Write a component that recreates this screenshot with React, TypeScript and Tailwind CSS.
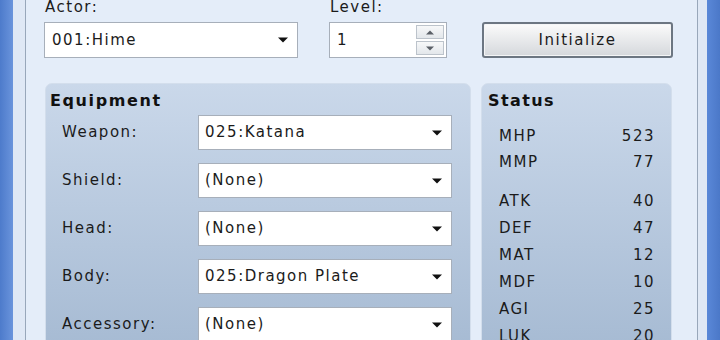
import React from 'react';

const EQUIPMENT = [
  { label: 'Weapon:', value: '025:Katana' },
  { label: 'Shield:', value: '(None)' },
  { label: 'Head:', value: '(None)' },
  { label: 'Body:', value: '025:Dragon Plate' },
  { label: 'Accessory:', value: '(None)' },
];

const POINTS = [
  { label: 'MHP', value: 523 },
  { label: 'MMP', value: 77 },
];

const PARAMS = [
  { label: 'ATK', value: 40 },
  { label: 'DEF', value: 47 },
  { label: 'MAT', value: 12 },
  { label: 'MDF', value: 10 },
  { label: 'AGI', value: 25 },
  { label: 'LUK', value: 20 },
];

function Arrow() {
  return (
    <svg width="10" height="6" viewBox="0 0 10 6" className="shrink-0">
      <path d="M0 0.5 H10 L5 5.5 Z" fill="#111" />
    </svg>
  );
}

function Select({ value, className }: { value: string; className: string }) {
  return (
    <div
      className={`flex items-center justify-between bg-white border border-[#a7afba] pl-[6px] pr-[9px] ${className}`}
    >
      <span className="leading-[15px]">{value}</span>
      <Arrow />
    </div>
  );
}

function SpinButton({ up }: { up?: boolean }) {
  return (
    <div className="flex-1 flex items-center justify-center border border-[#bcc3cb] bg-gradient-to-b from-[#f7f8f9] to-[#e3e7eb]">
      <svg width="8" height="5" viewBox="0 0 8 5">
        <path d={up ? 'M0 4.5 H8 L4 0.5 Z' : 'M0 0.5 H8 L4 4.5 Z'} fill="#5a5f66" />
      </svg>
    </div>
  );
}

export default function App() {
  return (
    <div
      className="w-[720px] h-[340px] overflow-hidden flex text-[15px] tracking-[1.5px] text-[#1b1b1b]"
      style={{ fontFamily: '"DejaVu Sans", Verdana, sans-serif' }}
    >
      {/* window frame, left */}
      <div className="w-[13px] bg-gradient-to-r from-[#4d7bcb] to-[#6a94dc]" />
      <div className="w-[13px] bg-[#dfe8f5] border-r border-[#98a7ba]" />

      {/* ================= MAIN PANEL ================= */}
      <div className="flex-1 bg-[#e4edf9] pl-[18px]">
        {/* top row */}
        <div className="flex items-start">
          <div className="w-[254px]">
            <div className="h-[22px] pl-[1px] leading-[15px]">Actor:</div>
            <Select value="001:Hime" className="h-[36px] pl-[7px] pr-[8px]" />
          </div>

          <div className="ml-[31px] w-[118px]">
            <div className="h-[22px] pl-[1px] leading-[15px]">Level:</div>
            <div className="h-[36px] flex items-stretch bg-white border border-[#a7afba]">
              <span className="flex-1 self-center pl-[7px] leading-[15px]">1</span>
              <div className="w-[30px] flex flex-col gap-[2px] py-[2px] pr-[2px]">
                <SpinButton up />
                <SpinButton />
              </div>
            </div>
          </div>

          <button className="ml-[35px] mt-[22px] w-[191px] h-[36px] rounded-[3px] border-2 border-[#6c7682] bg-gradient-to-b from-[#fbfbfb] to-[#d5d8dc] shadow-[inset_0_0_0_1px_#f4f5f6] text-[15px] tracking-[1.5px] text-[#1b1b1b]">
            Initialize
          </button>
        </div>

        {/* groups */}
        <div className="flex items-start mt-[25px]">
          {/* Equipment */}
          <div className="ml-[1px] w-[426px] h-[290px] rounded-t-[7px] border border-[#d3deec] bg-gradient-to-b from-[#cad8ea] to-[#a3b8d1] pt-[9px]">
            <div className="pl-[4px] leading-[15px] text-[16px] font-bold tracking-[1.6px] text-[#111]">Equipment</div>
            <div className="mt-[7px] flex flex-col gap-[13px]">
              {EQUIPMENT.map((e) => (
                <div key={e.label} className="flex items-center pl-[16px]">
                  <span className="w-[136px] leading-[15px]">{e.label}</span>
                  <Select value={e.value} className="w-[254px] h-[35px]" />
                </div>
              ))}
            </div>
          </div>

          {/* Status */}
          <div className="ml-[10px] w-[191px] h-[290px] rounded-t-[7px] border border-[#d3deec] bg-gradient-to-b from-[#cad8ea] to-[#a3b8d1] pt-[9px]">
            <div className="pl-[6px] leading-[15px] text-[16px] font-bold tracking-[1.4px] text-[#111]">Status</div>
            <div className="mt-[15px] pl-[17px] pr-[16px]">
              {POINTS.map((p) => (
                <div key={p.label} className="flex justify-between leading-[26px]">
                  <span>{p.label}</span>
                  <span>{p.value}</span>
                </div>
              ))}
              <div className="mt-[12.5px]">
                {PARAMS.map((p) => (
                  <div key={p.label} className="flex justify-between leading-[27px]">
                    <span>{p.label}</span>
                    <span>{p.value}</span>
                  </div>
                ))}
              </div>
            </div>
          </div>
        </div>
      </div>

      {/* window frame, right */}
      <div className="w-[10px] bg-[#dfe8f5] border-l border-[#98a7ba]" />
      <div className="w-[13px] bg-gradient-to-r from-[#5a88d8] to-[#4b78c8]" />
    </div>
  );
}
